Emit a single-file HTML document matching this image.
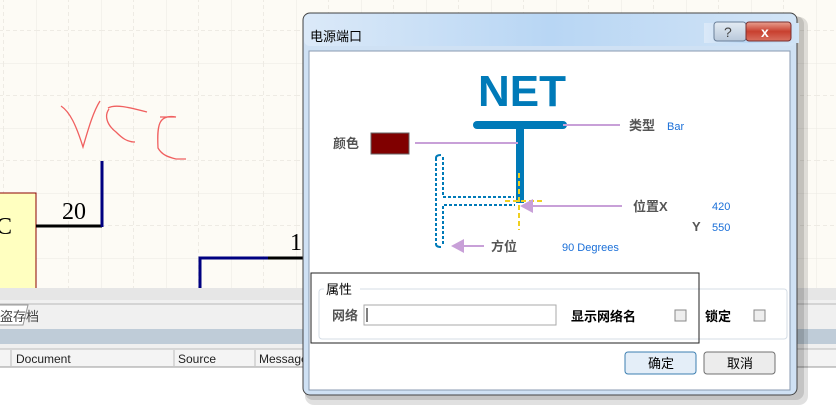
<!DOCTYPE html>
<html><head><meta charset="utf-8"><style>
body{margin:0;width:836px;height:406px;overflow:hidden;position:relative;font-family:"Liberation Sans","Noto Sans CJK SC",sans-serif;background:#fdfbf5}
.a{position:absolute}
.cj{font-family:"Liberation Sans","Noto Sans CJK SC",sans-serif}
</style></head><body>
<svg class="a" style="left:0;top:0" width="836" height="406">
<defs><pattern id="g" width="65" height="65" patternUnits="userSpaceOnUse" x="36" y="-2">
<path d="M0 0V65M0 0H65" stroke="#ece9e2" stroke-width="1"/>
<path d="M32.5 0V65M0 32.5H65" stroke="#eeebe4" stroke-dasharray="4 3"/></pattern>
<linearGradient id="tb" x1="0" x2="1"><stop offset="0" stop-color="#dbe9f8"/><stop offset="0.5" stop-color="#b8d6f4"/><stop offset="1" stop-color="#d2e4f6"/></linearGradient>
<linearGradient id="cl" x1="0" y1="0" x2="0" y2="1"><stop offset="0" stop-color="#e8a090"/><stop offset="0.5" stop-color="#c8402f"/><stop offset="1" stop-color="#d87060"/></linearGradient>
<linearGradient id="hl" x1="0" y1="0" x2="0" y2="1"><stop offset="0" stop-color="#e4ecf4"/><stop offset="1" stop-color="#b8c8da"/></linearGradient></defs>
<rect width="836" height="290" fill="url(#g)"/>
<rect x="-2" y="193" width="38" height="100" fill="#ffffc0" stroke="#8b0000"/>
<text x="-4" y="234" font-family="Liberation Serif" font-size="24">C</text>
<line x1="36" y1="226" x2="102" y2="226" stroke="#000" stroke-width="3"/>
<line x1="102" y1="161" x2="102" y2="227" stroke="#000080" stroke-width="3"/>
<text x="62" y="219" font-family="Liberation Serif" font-size="24">20</text>
<path d="M200 290V258H268" stroke="#000080" stroke-width="3" fill="none"/>
<line x1="268" y1="258" x2="305" y2="258" stroke="#000" stroke-width="3"/>
<text x="290" y="250" font-family="Liberation Serif" font-size="24">1</text>
<path d="M61 106C70 112 76 125 83 147C88 130 93 112 100 101M109 109C104 116 107 125 116 132C122 138 127 142 135 142M108 108C115 104 128 107 147 112M176 117C158 114 157 126 158 148C162 155 168 157 176 159C178 159 182 159 186 159M160 117H176" stroke="#f06060" stroke-width="1.3" fill="none"/>
<rect x="0" y="288" width="836" height="118" fill="#f0f0f0"/>
<rect x="0" y="288" width="836" height="12" fill="#e6e6e6"/>
<line x1="0" y1="304" x2="836" y2="304" stroke="#b8b8b8"/>
<path d="M0 305H28L23 325H0" fill="#fff" stroke="#999"/>
<rect x="0" y="329" width="836" height="15" fill="#bfccd8"/>
<rect x="0" y="349" width="836" height="58" fill="#fff"/>
<rect x="0" y="349" width="836" height="18" fill="#f4f4f4"/>
<line x1="0" y1="367" x2="836" y2="367" stroke="#999"/>
<line x1="0" y1="349" x2="836" y2="349" stroke="#bbb"/>
<line x1="11" y1="350" x2="11" y2="366" stroke="#bbb"/>
<line x1="174" y1="350" x2="174" y2="366" stroke="#bbb"/>
<line x1="255" y1="350" x2="255" y2="366" stroke="#bbb"/>
<text x="16" y="363" font-size="12" fill="#222">Document</text>
<text x="178" y="363" font-size="12" fill="#222">Source</text>
<text x="259" y="363" font-size="12" fill="#222">Message</text>
<!-- dialog shadow -->
<rect x="305" y="17" width="503" height="388" rx="9" fill="#000" opacity="0.12"/>
<rect x="305" y="16" width="499" height="384" rx="8" fill="#000" opacity="0.12"/>
<rect x="303" y="13" width="494" height="382" rx="7" fill="#cfe1f4" stroke="#444"/>
<rect x="304" y="14" width="492" height="32" rx="6" fill="url(#tb)"/>
<rect x="309" y="51" width="481" height="339" fill="#fff" stroke="#8a9ab0"/>
<rect x="704" y="23" width="95" height="20" fill="url(#tb)"/>
<rect x="714" y="22" width="32" height="19" rx="3" fill="url(#hl)" stroke="#6a7f99"/>
<text x="724" y="37" font-size="14" fill="#444">?</text>
<rect x="746" y="22" width="45" height="19" rx="3" fill="url(#cl)" stroke="#7a3030"/>
<text x="761" y="37" font-size="14" fill="#fff" font-weight="bold">x</text>
<text x="310" y="41" font-size="13" fill="#000" class="cj">电源端口</text>
<!-- diagram -->
<text x="478" y="106" font-size="44" font-weight="bold" fill="#007ab8">NET</text>
<line x1="477" y1="125" x2="563" y2="125" stroke="#007ab8" stroke-width="8" stroke-linecap="round"/>
<rect x="516" y="125" width="8" height="78" fill="#007ab8"/>
<line x1="563" y1="125" x2="620" y2="125" stroke="#c8a0d8" stroke-width="2"/>
<line x1="415" y1="143" x2="518" y2="143" stroke="#c8a0d8" stroke-width="2"/>
<rect x="371" y="133" width="38" height="21" fill="#800000" stroke="#666"/>
<path d="M443 197H514M444 205H515M436 158V244M443 157V196M443 206V245" stroke="#007ab8" stroke-width="2" stroke-dasharray="3 2" fill="none"/>
<path d="M436 158Q436 155 441 155M436 244Q436 247 441 247" stroke="#007ab8" stroke-width="2" fill="none"/>
<path d="M505 201H545M519 173V230" stroke="#f0d020" stroke-width="2" stroke-dasharray="5 3" fill="none"/>
<line x1="530" y1="206" x2="622" y2="206" stroke="#c8a0d8" stroke-width="2"/>
<path d="M520 206L533 199V213Z" fill="#c8a0d8"/>
<line x1="463" y1="246" x2="484" y2="246" stroke="#c8a0d8" stroke-width="2"/>
<path d="M451 246L464 239V253Z" fill="#c8a0d8"/>
<g class="cj" font-size="13" font-weight="bold" fill="#555">
<text x="333" y="148">颜色</text><text x="629" y="130">类型</text>
<text x="633" y="211">位置X</text><text x="692" y="231">Y</text><text x="491" y="251">方位</text></g>
<g font-size="11" fill="#1a6fd8"><text x="667" y="130">Bar</text><text x="712" y="210">420</text><text x="712" y="231">550</text><text x="562" y="251">90 Degrees</text></g>
<!-- group -->
<rect x="319" y="289" width="468" height="50" rx="3" fill="none" stroke="#d5dde6"/>
<rect x="324" y="281" width="36" height="16" fill="#fff"/>
<text x="326" y="294" font-size="13" fill="#000" class="cj">属性</text>
<rect x="311" y="273" width="388" height="70" fill="none" stroke="#222"/>
<text x="332" y="320" font-size="13" font-weight="bold" fill="#555" class="cj">网络</text>
<rect x="364" y="305" width="192" height="20" fill="#fff" stroke="#aaa"/>
<line x1="367" y1="308" x2="367" y2="322" stroke="#000"/>
<text x="571" y="321" font-size="13" font-weight="bold" fill="#000" class="cj">显示网络名</text>
<rect x="675" y="310" width="11" height="11" fill="#eee" stroke="#888"/>
<text x="705" y="321" font-size="13" font-weight="bold" fill="#000" class="cj">锁定</text>
<rect x="754" y="310" width="11" height="11" fill="#eee" stroke="#888"/>
<rect x="625" y="352" width="71" height="22" rx="3" fill="#e4eef8" stroke="#3c7fb1"/>
<rect x="704" y="352" width="71" height="22" rx="3" fill="#ececec" stroke="#707070"/>
<text x="648" y="368" font-size="13" fill="#000" class="cj">确定</text>
<text x="727" y="368" font-size="13" fill="#000" class="cj">取消</text>
</svg>
<div class="a cj" style="left:0;top:306px;font-size:13px;color:#444">盗存档</div>
</body></html>
